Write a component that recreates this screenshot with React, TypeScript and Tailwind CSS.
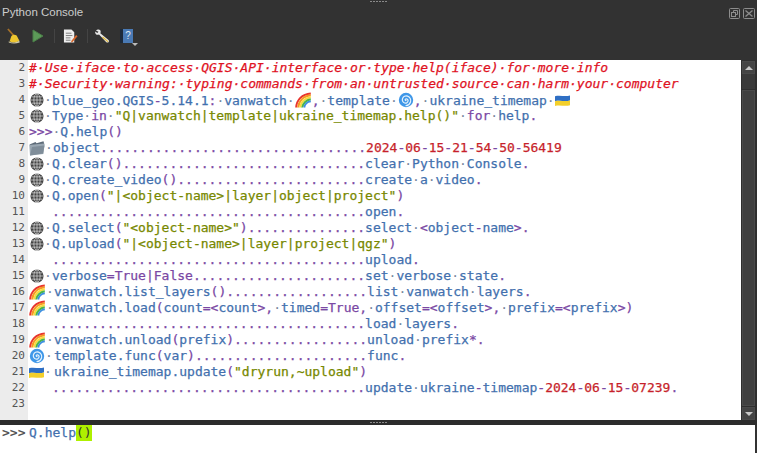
import { Fragment, type ReactNode } from 'react';

const BLUE = 'text-[#4270ae]';
const PURPLE = 'text-[#7a48a4]';
const OLIVE = 'text-[#778800]';
const RED = 'text-[#c71f2b]';

function Globe() {
  return (
    <svg width="14" height="14" viewBox="0 0 16 16" className="ml-[1px] shrink-0">
      <circle cx="8" cy="8" r="7.5" fill="#444" />
      <g stroke="#ddd" strokeWidth="0.8" fill="none">
        <ellipse cx="8" cy="8" rx="3.6" ry="7.3" />
        <path d="M8 .5v15M.7 8h14.6M1.7 4.4h12.6M1.7 11.6h12.6" />
      </g>
    </svg>
  );
}

function Folder() {
  return (
    <svg width="16" height="15" viewBox="0 0 16 15" className="shrink-0">
      <path d="M0.5 3.5l6-2.5 1 1.2 7-2 .8 3-13 3z" fill="#5d6b78" />
      <path d="M1 14.5L0.3 4 15 2.5l.6 1-1.2 9.5z" fill="#9aa7b2" />
      <path d="M1 14.5l2-8.5 12.5-1.6L14 12.6z" fill="#7f8d99" />
    </svg>
  );
}

function Rainbow() {
  return (
    <svg width="17" height="16" viewBox="0 0 17 16" fill="none" className="shrink-0">
      <path d="M1.2 15.5C1.5 8 7 2 15.8 1.4" stroke="#e8352e" strokeWidth="2" />
      <path d="M3.2 15.5C3.6 9.4 8 4 15.8 3.3" stroke="#f59a23" strokeWidth="2" />
      <path d="M5.2 15.5C5.6 10.6 9.5 5.9 15.8 5.3" stroke="#f7dc3a" strokeWidth="2" />
      <path d="M7.2 15.5C7.6 11.6 11 8 15.8 7.3" stroke="#4cb648" strokeWidth="2" />
      <path d="M9.2 15.5C9.6 12.6 12.4 9.8 15.8 9.3" stroke="#3d8fe0" strokeWidth="2" />
    </svg>
  );
}

function Spiral() {
  return (
    <svg width="16" height="16" viewBox="0 0 16 16" fill="none" className="shrink-0">
      <circle cx="8" cy="8" r="7.2" fill="#3f97e8" />
      <path
        d="M8 8.6c-.9 0-1.2-1.2-.3-1.6 1.2-.5 2.5.5 2.4 1.8-.1 1.6-1.9 2.6-3.4 2.2C4.8 10.5 3.9 8.4 4.5 6.6 5.2 4.6 7.5 3.5 9.5 4.1c2.5.7 3.800 3.500 3 5.900-.6 2-2.400 3.400-4.500 3.600"
        stroke="#e6f3fd"
        strokeWidth="1.2"
        strokeLinecap="round"
      />
    </svg>
  );
}

function Flag() {
  return (
    <svg width="15" height="11" viewBox="0 0 15 11" className="inline-block shrink-0 align-[-1px]">
      <path d="M0 1.2c5-1.400 10 .8 15-.7V5.500c-5 1.500-10-.7-15 .7z" fill="#2f6fc4" />
      <path d="M0 6.200c5-1.400 10 .8 15-.7v4.700c-5 1.500-10-.7-15 .7z" fill="#f3cf2b" />
    </svg>
  );
}

const icons: Record<string, ReactNode> = {
  g: <Globe />,
  f: <Folder />,
  r: <Rainbow />,
  s: <Spiral />,
  u: <Flag />,
};

const dotWidth: Record<string, string> = {
  g: 'w-[8px]',
  f: 'w-[8px]',
  r: 'w-[8px]',
  s: 'w-[9px]',
  u: 'w-[10px]',
};

function Code({ text }: { text: string }) {
  // rough python-ish colouring, same regex for every line
  const parts = text.match(/"[^"]*"|\d{4}|\d+\.\d+\.\d+|[A-Za-z_][A-Za-z_0-9]*|\.{2,}| |./g) ?? [];
  return (
    <>
      {parts.map((p, i) => {
        if (p === ' ') return <span key={i} className="text-[#77869c] [-webkit-text-stroke:0px]">·</span>;
        let color = PURPLE;
        if (p.startsWith('"')) color = OLIVE;
        else if (/^\d+\.\d/.test(p)) color = BLUE;
        else if (/^\d/.test(p)) color = RED;
        else if (['in', 'for', 'True', 'False'].includes(p)) color = PURPLE;
        else if (/^[A-Za-z_]/.test(p)) color = BLUE;
        else if (p === '.' && /[A-Za-z]/.test(parts[i + 1] ?? '')) color = BLUE;
        const spaced = p.startsWith('"') ? p.split(' ') : [p];
        return (
          <span key={i} className={color}>
            {spaced.map((s, j) => (
              <Fragment key={j}>
                {j > 0 && '·'}
                {s}
              </Fragment>
            ))}
          </span>
        );
      })}
    </>
  );
}

const pad = (s: string) => s.padEnd(40, '.');

const rows: { icon?: string; text?: ReactNode; comment?: boolean; indent?: boolean }[] = [
  { text: '# Use iface to access QGIS API interface or type help(iface) for more info', comment: true },
  { text: '# Security warning: typing commands from an untrusted source can harm your computer', comment: true },
  {
    icon: 'g',
    text: (
      <>
        <Code text="blue_geo.QGIS-5.14.1: vanwatch " />
        <span className="inline-flex align-[-3px]"><Rainbow /></span>
        <Code text=", template " />
        <span className="inline-flex align-[-3px]"><Spiral /></span>
        <Code text=", ukraine_timemap " />
        <Flag />
      </>
    ),
  },
  { icon: 'g', text: <Code text={'Type in "Q|vanwatch|template|ukraine_timemap.help()" for help.'} /> },
  { text: <Code text=">>> Q.help()" /> },
  { icon: 'f', text: <Code text={pad('object') + '2024-06-15-21-54-50-56419'} /> },
  { icon: 'g', text: <Code text={pad('Q.clear()') + 'clear Python Console.'} /> },
  { icon: 'g', text: <Code text={pad('Q.create_video()') + 'create a video.'} /> },
  { icon: 'g', text: <Code text={'Q.open("|<object-name>|layer|object|project")'} /> },
  { indent: true, text: <Code text={pad('') + 'open.'} /> },
  { icon: 'g', text: <Code text={pad('Q.select("<object-name>")') + 'select <object-name>.'} /> },
  { icon: 'g', text: <Code text={'Q.upload("|<object-name>|layer|project|qgz")'} /> },
  { indent: true, text: <Code text={pad('') + 'upload.'} /> },
  { icon: 'g', text: <Code text={pad('verbose=True|False') + 'set verbose state.'} /> },
  { icon: 'r', text: <Code text={pad('vanwatch.list_layers()') + 'list vanwatch layers.'} /> },
  { icon: 'r', text: <Code text="vanwatch.load(count=<count>, timed=True, offset=<offset>, prefix=<prefix>)" /> },
  { indent: true, text: <Code text={pad('') + 'load layers.'} /> },
  { icon: 'r', text: <Code text={pad('vanwatch.unload(prefix)') + 'unload prefix*.'} /> },
  { icon: 's', text: <Code text={pad('template.func(var)') + 'func.'} /> },
  { icon: 'u', text: <Code text={'ukraine_timemap.update("dryrun,~upload")'} /> },
  { indent: true, text: <Code text={pad('') + 'update ukraine-timemap-2024-06-15-07239.'} /> },
  {},
];

function Handle() {
  return (
    <div className="flex justify-center gap-[1px]">
      {[0, 1, 2, 3, 4, 5].map((i) => (
        <span key={i} className="h-[1px] w-[2px] bg-[#8a8a8a]" />
      ))}
    </div>
  );
}

function Toolbar() {
  return (
    <div className="flex h-[24px] items-center pl-[7px]">
      {/* clear */}
      <svg width="14" height="16" viewBox="0 0 16 18">
        <path d="M1 1l8 9" stroke="#a5702a" strokeWidth="2" />
        <path d="M5 9c2-2 4-2 6-.5l3 5.500c-3 3-8 3-11 1z" fill="#eec62f" />
        <path d="M2 15c3 2 8 2 12-1l.5 2.500c-4 1.500-9 1.500-12.500 0z" fill="#cfc9a8" />
      </svg>
      <svg width="12" height="14" viewBox="0 0 12 14" className="ml-[11px]">
        <path d="M1 1l10 6-10 6z" fill="#5c9a58" stroke="#4b7f48" />
      </svg>
      <span className="ml-[10px] h-[14px] w-[1px] bg-[#444]" />
      <svg width="15" height="16" viewBox="0 0 16 16" className="ml-[8px]">
        <path d="M1 1h8l3 3v11H1z" fill="#eeeeee" />
        <path d="M3 5h6M3 7.500h7M3 10h5M3 12.500h5" stroke="#777" />
        <path d="M9 13l5-6 1.500 1.200-5 6-2 .6z" fill="#d8662a" />
      </svg>
      <span className="ml-[9px] h-[14px] w-[1px] bg-[#444]" />
      <svg width="16" height="16" viewBox="0 0 16 16" className="ml-[6px]">
        <path d="M2 2.500c1-1 3-1.500 4-.5 1 1 .8 2.500.3 3.300L14.500 12c.6.600.600 1.600 0 2.200-.7.600-1.500.5-2.200 0L5 6.500c-1.200.4-2.500.3-3.300-.6-.6-.8-.7-1.600-.4-2.400l2 1.500 1.200-1.200z" fill="#e8e8e8" />
        <path d="M9 8.500l5 4.500c.5.500.4 1-.2 1.300L8 9.500z" fill="#e0b93c" />
      </svg>
      <div className="relative ml-[10px] h-[14px] w-[13px] border-l-[3px] border-[#1d2b3c] bg-[#4a7ab5]">
        <span className="block text-center font-['Liberation_Sans',sans-serif] text-[10px] leading-[14px] text-[#dfe8f2]">?</span>
        <span className="absolute -right-[5px] bottom-[-3px] h-0 w-0 border-x-[3px] border-t-[3px] border-x-transparent border-t-[#bbb]" />
      </div>
    </div>
  );
}

function Scrollbar() {
  return (
    <div className="flex w-[16px] shrink-0 flex-col bg-[#2f2f2f] pl-[1px] pr-[2px] pt-[1px]">
      <div className="flex h-[13px] items-center justify-center border border-[#4a4a4a] bg-[#444]">
        <span className="h-0 w-0 border-x-[4px] border-b-[4px] border-x-transparent border-b-[#c8c8c8]" />
      </div>
      <div className="h-[15px] bg-[#3a3a3a]" />
      <div className="mt-[1px] flex-1 border border-[#4a4a4a] bg-[#404040]" />
      <div className="mt-[1px] flex h-[13px] items-center justify-center border border-[#4a4a4a] bg-[#444]">
        <span className="h-0 w-0 border-x-[4px] border-t-[4px] border-x-transparent border-t-[#c8c8c8]" />
      </div>
    </div>
  );
}

export default function App() {
  return (
    <div className="flex h-[453px] w-[757px] flex-col overflow-hidden bg-[#323232] font-['DejaVu_Sans_Mono',monospace]">
      {/* Dock title + toolbar */}
      <div className="h-[60px] shrink-0 pt-[1px]">
        <Handle />
        <div className="flex h-[22px] items-center justify-between pl-[2px] pr-[2px]">
          <span className="font-['Liberation_Sans',sans-serif] text-[11.5px] text-[#cccccc]">Python Console</span>
          <div className="flex gap-[3px]">
            <svg width="11" height="11" viewBox="0 0 11 11" fill="none" stroke="#8d8d8d">
              <rect x=".5" y=".5" width="10" height="10" rx="1" />
              <rect x="2.5" y="4.5" width="4" height="4" />
              <path d="M4.5 4.5v-2h4v4h-2" />
            </svg>
            <svg width="12" height="11" viewBox="0 0 12 11" fill="none" stroke="#8d8d8d">
              <rect x=".5" y=".5" width="11" height="10" rx="1" />
              <path d="M2.500 2.500l7 6M9.500 2.500l-7 6" strokeWidth="1.3" />
            </svg>
          </div>
        </div>
        <Toolbar />
      </div>

      {/* Output */}
      <div className="flex h-[360px] shrink-0">
        <div className="w-[28px] shrink-0 bg-[#ececec]">
          {rows.map((_, i) => (
            <div key={i} className="h-[16px] pr-[3px] text-right text-[11px] leading-[16px] text-[#555]">
              {i + 2}
            </div>
          ))}
        </div>
        <div className="min-w-0 flex-1 bg-white pl-[1px] text-[13px] [-webkit-text-stroke:0.25px]">
          {rows.map((r, i) => (
            <div key={i} className="flex h-[16px] items-center whitespace-pre leading-[16px]">
              {r.icon && icons[r.icon]}
              {r.icon && (
                <span className={`shrink-0 text-[#77869c] [-webkit-text-stroke:0px] ${dotWidth[r.icon]}`}>·</span>
              )}
              {r.indent && <span className="w-[23px] shrink-0" />}
              {r.comment ? (
                <span className="italic text-[#e0121f]">{String(r.text).replaceAll(' ', '·')}</span>
              ) : (
                <span>{r.text}</span>
              )}
            </div>
          ))}
        </div>
        <Scrollbar />
      </div>

      {/* Input */}
      <div className="flex h-[5px] shrink-0 items-center bg-[#2c2c2c]">
        <div className="w-full"><Handle /></div>
      </div>
      <div className="flex flex-1 items-start border-r-[2px] border-[#323232] bg-white text-[13px] leading-[16px]">
        <span className="w-[29px] shrink-0 pl-[2px] font-bold text-[#555]">&gt;&gt;&gt;</span>
        <span className="text-[#4270ae] [-webkit-text-stroke:0.25px]">Q.help</span>
        <span className="bg-[#aef000] text-[#333]">()</span>
      </div>
    </div>
  );
}
